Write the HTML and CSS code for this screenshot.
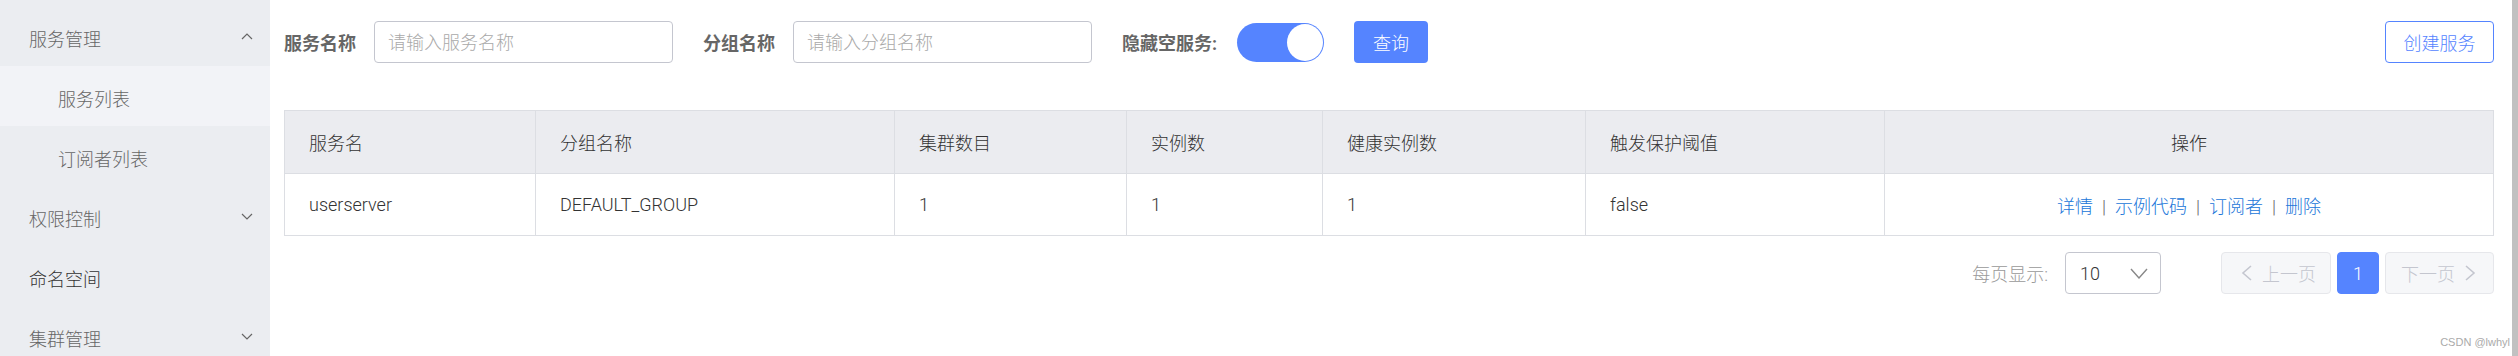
FILE: index.html
```html
<!DOCTYPE html>
<html lang="zh-CN">
<head>
    <meta charset="UTF-8">
    <title>服务列表</title>
    <link rel="stylesheet" href="styles.css">
</head>
<body>
    <div class="layout">
        <aside class="sidebar">
            <ul class="menu">
                <li class="menu-item">
                    <span>服务管理</span>
                    <svg class="arrow" width="12" height="7" viewBox="0 0 12 7"><polyline points="1,6 6,1 11,6" fill="none" stroke="#666" stroke-width="1.2"/></svg>
                </li>
                <li class="sub-item active">服务列表</li>
                <li class="sub-item">订阅者列表</li>
                <li class="menu-item">
                    <span>权限控制</span>
                    <svg class="arrow" width="12" height="7" viewBox="0 0 12 7"><polyline points="1,1 6,6 11,1" fill="none" stroke="#666" stroke-width="1.2"/></svg>
                </li>
                <li class="menu-item leaf"><span>命名空间</span></li>
                <li class="menu-item">
                    <span>集群管理</span>
                    <svg class="arrow" width="12" height="7" viewBox="0 0 12 7"><polyline points="1,1 6,6 11,1" fill="none" stroke="#666" stroke-width="1.2"/></svg>
                </li>
            </ul>
        </aside>

        <main class="main">
            <div class="toolbar">
                <div class="field">
                    <label>服务名称</label>
                    <input class="text-input" type="text" placeholder="请输入服务名称">
                </div>
                <div class="field">
                    <label>分组名称</label>
                    <input class="text-input" type="text" placeholder="请输入分组名称">
                </div>
                <div class="field wide">
                    <label>隐藏空服务:</label>
                    <div class="switch"><span class="knob"></span></div>
                </div>
                <button class="btn btn-primary">查询</button>
                <button class="btn btn-outline">创建服务</button>
            </div>

            <table class="service-table">
                <colgroup>
                    <col style="width: 251px">
                    <col style="width: 359px">
                    <col style="width: 232px">
                    <col style="width: 196px">
                    <col style="width: 263px">
                    <col style="width: 299px">
                    <col>
                </colgroup>
                <thead>
                    <tr>
                        <th>服务名</th>
                        <th>分组名称</th>
                        <th>集群数目</th>
                        <th>实例数</th>
                        <th>健康实例数</th>
                        <th>触发保护阈值</th>
                        <th class="center">操作</th>
                    </tr>
                </thead>
                <tbody>
                    <tr>
                        <td>userserver</td>
                        <td>DEFAULT_GROUP</td>
                        <td>1</td>
                        <td>1</td>
                        <td>1</td>
                        <td>false</td>
                        <td class="center">
                            <a href="#">详情</a><span class="sep">|</span><a href="#">示例代码</a><span class="sep">|</span><a href="#">订阅者</a><span class="sep">|</span><a href="#">删除</a>
                        </td>
                    </tr>
                </tbody>
            </table>

            <div class="pager">
                <span class="page-size-label">每页显示:</span>
                <div class="select">
                    <span>10</span>
                    <svg width="18" height="11" viewBox="0 0 18 11"><polyline points="1,1 9,10 17,1" fill="none" stroke="#888" stroke-width="1.4"/></svg>
                </div>
                <button class="page-btn prev">
                    <svg width="11" height="16" viewBox="0 0 11 16"><polyline points="10,1 2,8 10,15" fill="none" stroke="#c4c6cf" stroke-width="1.6"/></svg>
                    <span>上一页</span>
                </button>
                <button class="page-btn current">1</button>
                <button class="page-btn next">
                    <span>下一页</span>
                    <svg width="11" height="16" viewBox="0 0 11 16"><polyline points="1,1 9,8 1,15" fill="none" stroke="#c4c6cf" stroke-width="1.6"/></svg>
                </button>
            </div>

            <div class="watermark">CSDN @lwhyl</div>
        </main>

        <div class="scrollbar"></div>
    </div>
</body>
</html>
```

FILE: styles.css
```css
body {
    margin: 0;
    font-family: Roboto, "Noto Sans CJK SC", sans-serif;
    font-size: 18px;
    font-weight: 300;
    color: #333;
    background: #fff;
    overflow: hidden;
}
.layout {
    display: flex;
    height: 356px;
}
.sidebar {
    width: 270px;
    flex-shrink: 0;
    background-color: #ebedf1;
}
.menu {
    list-style: none;
    margin: 0;
    padding: 6px 0 0 0;
}
.menu-item, .sub-item {
    height: 60px;
    display: flex;
    align-items: center;
    padding-top: 4px;
    box-sizing: border-box;
    color: #666;
}
.menu-item {
    padding-left: 29px;
    padding-right: 17px;
    justify-content: space-between;
}
.menu-item.leaf {
    color: #333;
}
.sub-item {
    padding-left: 58px;
}
.sub-item.active {
    background-color: #f2f3f7;
}
.arrow {
    margin-top: -4px;
}
.main {
    flex: 1;
    position: relative;
    padding: 21px 18px 0 14px;
}
.toolbar {
    display: flex;
    align-items: center;
    height: 42px;
}
.field {
    display: flex;
    align-items: center;
    margin-right: 30px;
}
.field.wide {
    margin-right: 30px;
}
.field label {
    font-weight: bold;
    color: #666;
    margin-right: 18px;
}
.field.wide label {
    margin-right: 20px;
}
.text-input {
    width: 299px;
    height: 42px;
    box-sizing: border-box;
    border: 1px solid #c4c6cf;
    border-radius: 4px;
    padding: 0 13px;
    font-family: inherit;
    font-size: 18px;
    font-weight: 300;
    color: #333;
    outline: none;
}
.text-input::placeholder {
    color: #a9a9a9;
}
.switch {
    width: 87px;
    height: 39px;
    box-sizing: border-box;
    border-radius: 20px;
    background-color: #5584ff;
    display: flex;
    align-items: center;
    justify-content: flex-end;
    padding: 0 1px;
}
.knob {
    width: 36px;
    height: 37px;
    border-radius: 50%;
    background: #fff;
}
.btn {
    height: 42px;
    border-radius: 4px;
    font-family: inherit;
    font-size: 18px;
    font-weight: 300;
    cursor: pointer;
}
.btn-primary {
    width: 74px;
    background-color: #5584ff;
    border: none;
    color: #fff;
}
.btn-outline {
    margin-left: auto;
    width: 109px;
    background: #fff;
    border: 1px solid #5584ff;
    color: #5584ff;
}
.service-table {
    margin-top: 47px;
    width: 100%;
    border-collapse: collapse;
    table-layout: fixed;
}
.service-table th, .service-table td {
    border: 1px solid #dcdee3;
    text-align: left;
    padding: 0 24px;
    font-weight: 300;
}
.service-table th {
    height: 62px;
    background-color: #ebecf0;
}
.service-table td {
    height: 61px;
}
.service-table .center {
    text-align: center;
}
.service-table a {
    color: #2176d9;
    text-decoration: none;
}
.sep {
    color: #666;
    margin: 0 9px;
}
.pager {
    display: flex;
    justify-content: flex-end;
    align-items: center;
    margin-top: 16px;
}
.page-size-label {
    color: #999;
    margin-right: 17px;
}
.select {
    width: 96px;
    height: 42px;
    box-sizing: border-box;
    border: 1px solid #c4c6cf;
    border-radius: 4px;
    display: flex;
    align-items: center;
    justify-content: space-between;
    padding: 0 12px 0 14px;
    margin-right: 60px;
}
.page-btn {
    height: 42px;
    box-sizing: border-box;
    border: 1px solid #e6e7eb;
    border-radius: 4px;
    background-color: #f6f7f9;
    color: #c4c6cf;
    font-family: inherit;
    font-size: 18px;
    font-weight: 300;
    display: flex;
    align-items: center;
    gap: 10px;
}
.page-btn.prev {
    width: 110px;
    padding: 0 0 0 19px;
}
.page-btn.next {
    width: 109px;
    padding: 0 0 0 15px;
}
.page-btn.current {
    width: 42px;
    margin: 0 6px;
    justify-content: center;
    background-color: #5584ff;
    border-color: #5584ff;
    color: #fff;
}
.watermark {
    position: absolute;
    right: 2px;
    bottom: 8px;
    font-family: "Liberation Sans", sans-serif;
    font-size: 11px;
    color: #aaa;
}
.scrollbar {
    width: 6px;
    flex-shrink: 0;
    background-color: #c1c1c1;
}
```
